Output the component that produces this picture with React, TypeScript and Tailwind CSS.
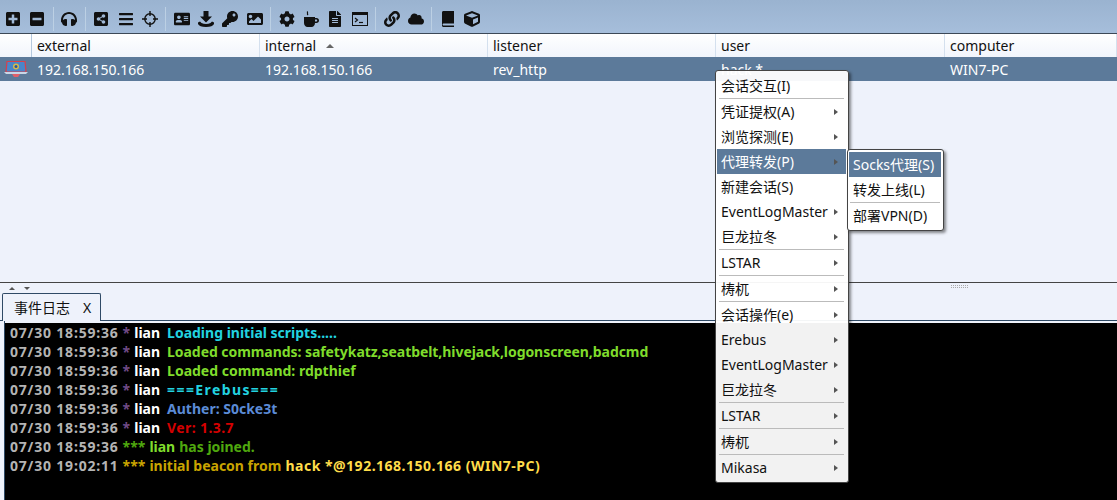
import {
  FaPlusSquare,
  FaMinusSquare,
  FaHeadphones,
  FaShareAltSquare,
  FaBars,
  FaAddressCard,
  FaKey,
  FaImage,
  FaCog,
  FaFileAlt,
  FaLink,
  FaCloud,
  FaCube,
} from 'react-icons/fa'

const FONT = '[font-family:"Noto_Sans","Noto_Sans_CJK_SC",sans-serif]'

function Crosshair({ size }: { size: number }) {
  return (
    <svg width={size} height={size} viewBox="0 0 16 16" fill="none" stroke="currentColor" strokeWidth="1.4">
      <circle cx="8" cy="8" r="5.2" />
      <path d="M8 0v5M8 11v5M0 8h5M11 8h5" />
    </svg>
  )
}

function Download({ size }: { size: number }) {
  return (
    <svg width={size} height={size} viewBox="0 0 16 16" fill="currentColor">
      <path d="M5.5 0h5v5.5H14L8 11.5 2 5.5h3.5z" />
      <path d="M0 11.5l2-1 1.5 1.5c2.5 1.4 6.5 1.4 9 0l1.5-1.5 2 1V13c-1 2-3.5 3-8 3s-7-1-8-3z" />
    </svg>
  )
}

function Coffee({ size }: { size: number }) {
  return (
    <svg width={size} height={size} viewBox="0 0 16 16" fill="currentColor">
      <path d="M1 6h11v6c0 2-1.5 4-3.5 4h-4C2.5 16 1 14 1 12z" />
      <path d="M12 7h1.5C15 7 16 8 16 9.500S15 12 13.500 12H12v-1.500h1.200c.6 0 1-.4 1-1s-.4-1-1-1H12z" />
      <path d="M4 0.500c1.500 1-0.500 2 1 3.500" fill="none" stroke="currentColor" strokeWidth="1.2" />
    </svg>
  )
}

function Terminal({ size }: { size: number }) {
  return (
    <svg width={size} height={size} viewBox="0 0 16 16" fill="none" stroke="currentColor">
      <rect x="0.5" y="1.5" width="15" height="13" strokeWidth="1" />
      <path d="M0 2h16v2H0z" fill="currentColor" stroke="none" />
      <path d="M3 7l2.500 2L3 11" strokeWidth="1.2" />
      <path d="M7 11.500h4" strokeWidth="1.2" />
    </svg>
  )
}

function Book({ size }: { size: number }) {
  return (
    <svg width={size} height={size} viewBox="0 0 16 16" fill="currentColor">
      <path d="M2 1.500C2 .6 2.600 0 3.500 0H14v12.500H4c-1 0-1.400.4-1.400 1s.4 1 1.400 1h10V16H3.500C2.600 16 2 15.400 2 14.500z" />
    </svg>
  )
}

const TOOL_GROUPS = [
  [FaPlusSquare, FaMinusSquare],
  [FaHeadphones],
  [FaShareAltSquare, FaBars, Crosshair],
  [FaAddressCard, Download, FaKey, FaImage],
  [FaCog, Coffee, FaFileAlt, Terminal],
  [FaLink, FaCloud],
  [Book, FaCube],
]

const COLUMNS = ['external', 'internal', 'listener', 'user', 'computer']

const ROW = ['192.168.150.166', '192.168.150.166', 'rev_http', 'hack *', 'WIN7-PC']

const MENU = [
  { label: '会话交互(I)', sep: true },
  { label: '凭证提权(A)', arrow: true },
  { label: '浏览探测(E)', arrow: true },
  { label: '代理转发(P)', arrow: true, active: true },
  { label: '新建会话(S)' },
  { label: 'EventLogMaster', arrow: true },
  { label: '巨龙拉冬', arrow: true, sep: true },
  { label: 'LSTAR', arrow: true, sep: true },
  { label: '梼杌', arrow: true, sep: true },
  { label: '会话操作(e)', arrow: true },
  { label: 'Erebus', arrow: true },
  { label: 'EventLogMaster', arrow: true },
  { label: '巨龙拉冬', arrow: true, sep: true },
  { label: 'LSTAR', arrow: true, sep: true },
  { label: '梼杌', arrow: true, sep: true },
  { label: 'Mikasa', arrow: true },
]

const GRAY = 'text-[#b4b4b4] tracking-[0.8px]'
const GREEN = 'text-[#7fdc2c]'
const CYAN = 'text-[#22d3e0]'

const LOG = [
  { msg: 'Loading initial scripts.....', color: CYAN },
  { msg: 'Loaded commands: safetykatz,seatbelt,hivejack,logonscreen,badcmd', color: `${GREEN} tracking-[-0.06px]` },
  { msg: 'Loaded command: rdpthief', color: GREEN },
  { msg: '===Erebus===', color: `${CYAN} tracking-[1.4px]` },
  { msg: 'Auther: S0cke3t', color: 'text-[#5b8bd6]' },
  { msg: 'Ver: 1.3.7', color: 'text-[#d40000] tracking-[0.4px]' },
]

function Arrow() {
  return <span className="absolute right-[8px] top-1/2 h-0 w-0 -translate-y-1/2 border-y-[3px] border-l-[4px] border-y-transparent border-l-[#555]" />
}

function SessionIcon() {
  return (
    <svg width="24" height="17" viewBox="0 0 24 17" className="shrink-0">
      <path d="M3 0.5h18l1 10.500H2z" fill="#4a86c8" stroke="#d8404a" strokeWidth="1.2" />
      <circle cx="12" cy="5.5" r="3" fill="#d9b94a" />
      <circle cx="12" cy="5.5" r="1.5" fill="#2a5a9a" />
      <path d="M0 11h24l-2 2H2z" fill="#c9d6e6" />
      <path d="M8 13h8l-2 3h-4z" fill="#e0606a" />
    </svg>
  )
}

export default function App() {
  return (
    <div className={`${FONT} relative flex h-[500px] w-[1117px] flex-col overflow-hidden bg-[#eef2fb] text-[14px] text-[#111]`}>
      {/* toolbar */}
      <div className="flex h-[34px] shrink-0 items-center border-b border-[#3c4856] bg-gradient-to-b from-[#9ab3d0] to-[#a6bedb] pl-[5px] pt-[5px]">
        {TOOL_GROUPS.map((group, i) => (
          <div key={i} className="flex items-center">
            {i > 0 && <span className="mx-[7.5px] h-[24px] w-px bg-[#bcd0e4]" />}
            <div className="flex items-center gap-[8.3px]">
              {group.map((Icon, j) => (
                <span key={j} className="flex w-[16px] items-center justify-center text-[#111]">
                  <Icon size={16} />
                </span>
              ))}
            </div>
          </div>
        ))}
      </div>

      {/* session table */}
      <div className="grid h-[23px] shrink-0 grid-cols-[32px_228px_228px_228px_229px_1fr] bg-gradient-to-b from-white to-[#f1f5fc] leading-[23px]">
        <div className="border-r border-[#b4c8de]" />
        {COLUMNS.map((c) => (
          <div key={c} className="flex items-center gap-[10px] border-r border-[#d4e0ee] pl-[5px]">
            {c}
            {c === 'internal' && <span className="h-0 w-0 border-x-[4px] border-b-[4px] border-x-transparent border-b-[#666]" />}
          </div>
        ))}
      </div>
      <div className="grid h-[24px] shrink-0 grid-cols-[32px_228px_228px_228px_229px_1fr] bg-[#5c7a9a] leading-[25px] text-white">
        <div className="flex items-center pl-[4px]">
          <SessionIcon />
        </div>
        {ROW.map((c, i) => (
          <div key={i} className="pl-[5px]">
            {c}
          </div>
        ))}
      </div>
      <div className="flex-1 border-b border-[#444]" />

      {/* split handle */}
      <div className="relative flex h-[10px] shrink-0 items-center gap-[9px] pl-[9px]">
        <span className="h-0 w-0 border-x-[3px] border-b-[3px] border-x-transparent border-b-[#555]" />
        <span className="h-0 w-0 border-x-[3px] border-t-[3px] border-x-transparent border-t-[#555]" />
        <span className="absolute left-[951px] top-[2px] h-[3px] w-[17px] border-y border-dotted border-[#aaa]" />
      </div>

      {/* log tab */}
      <div className="relative h-[28px] shrink-0 pl-[2px]">
        <div className="absolute bottom-0 left-0 right-0 h-px bg-[#2f4a66]" />
        <div className="relative z-10 flex h-[28px] w-[99px] items-center gap-[13px] rounded-t-[2px] border border-b-0 border-[#2f4a66] bg-[#eef2fb] pl-[11px]">
          <span>事件日志</span>
          <span>X</span>
        </div>
      </div>

      {/* console */}
      <div className="ml-[4px] h-[179px] shrink-0 border-l border-[#2f4a66] pt-[2px]">
        <div className="h-full bg-black pl-[5px] text-[14px] font-bold leading-[19px] whitespace-nowrap">
          {LOG.map((l, i) => (
            <div key={i} className="flex">
              <span className={GRAY}>07/30 18:59:36</span>
              <span className="ml-[4px] text-[#6f4a86]">*</span>
              <span className="ml-[4px] text-white">lian</span>
              <span className={`${l.color} ml-[7px]`}>{l.msg}</span>
            </div>
          ))}
          <div className="flex">
            <span className={GRAY}>07/30 18:59:36</span>
            <span className="ml-[4px] text-[#4fa80e]">***</span>
            <span className="ml-[4px] text-[#7fdc2c]">lian</span>
            <span className="ml-[4px] text-[#4fa80e]">has joined.</span>
          </div>
          <div className="flex">
            <span className={GRAY}>07/30 19:02:11</span>
            <span className="ml-[4px] text-[#c9a400]">***</span>
            <span className="ml-[4px] text-[#c9a400]">initial beacon from</span>
            <span className="ml-[4px] tracking-[0.5px] text-[#ffdc4a]">hack *@192.168.150.166 (WIN7-PC)</span>
          </div>
        </div>
      </div>

      {/* context menu */}
      <div className="absolute left-[715px] top-[70px] w-[134px] rounded-[3px] border border-[#444] bg-white/95 py-[2px] pl-[1px] pr-[2px] shadow-[2px_2px_3px_rgba(0,0,0,0.45)]">
        {MENU.map((m, i) => (
          <div key={i}>
            <div className={`relative h-[25px] pl-[4px] leading-[25px] ${m.active ? 'bg-[#5c7a9a] text-white' : ''}`}>
              {m.label}
              {m.arrow && <Arrow />}
            </div>
            {m.sep && <div className="mx-[2px] h-px bg-[#bbb]" />}
          </div>
        ))}
      </div>

      {/* submenu */}
      <div className="absolute left-[847px] top-[149px] w-[97px] rounded-[3px] border border-[#444] bg-white py-[2px] pl-[1px] pr-[2px] shadow-[2px_2px_3px_rgba(0,0,0,0.45)]">
        <div className="h-[25px] bg-[#5c7a9a] pl-[4px] leading-[25px] text-white">Socks代理(S)</div>
        <div className="h-[25px] pl-[4px] leading-[25px]">转发上线(L)</div>
        <div className="mx-[1px] h-px bg-[#bbb]" />
        <div className="h-[25px] pl-[4px] leading-[25px]">部署VPN(D)</div>
      </div>
    </div>
  )
}
